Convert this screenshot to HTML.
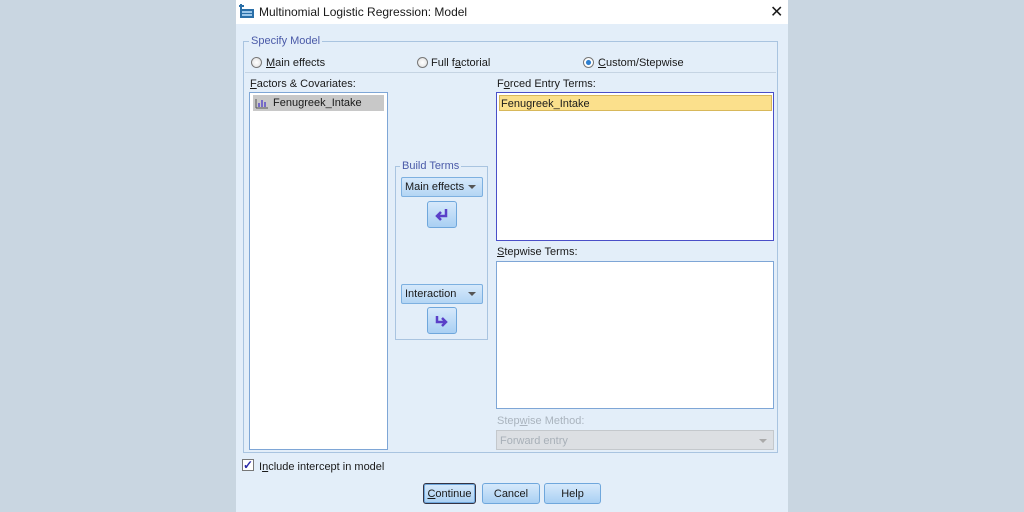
<!DOCTYPE html>
<html><head><meta charset="utf-8"><style>
*{margin:0;padding:0;box-sizing:border-box}
body{width:1024px;height:512px;background:#c9d6e1;position:relative;overflow:hidden;font-family:"Liberation Sans",sans-serif;font-size:11px;color:#1a1a1a}
.a{position:absolute}
#dlg{left:236px;top:0;width:552px;height:512px;background:#e3eef9}
#tb{left:0;top:0;width:552px;height:24px;background:#fff}
.box{background:#fff;border:1px solid #7ea6d6}
.btn{background:linear-gradient(#d6e9fb,#a9d0f3);border:1px solid #6fa7dc;border-radius:3px;text-align:center;color:#1a1a1a}
.dd{background:linear-gradient(#d6e9fb,#b3d5f4);border:1px solid #7db0e0;border-radius:2px;padding-left:3px;line-height:19px}
.dd:after{content:"";position:absolute;right:6px;top:7px;border:4px solid transparent;border-top:4px solid #555;border-bottom:0}
.radio{width:11px;height:11px;border-radius:50%;border:1px solid #777;background:radial-gradient(#fff,#ddd)}
u{text-decoration:underline}
</style></head><body>
<div id="dlg" class="a">
 <div id="tb" class="a">
  <svg class="a" style="left:3px;top:3px" width="16" height="16"><rect x="1" y="6" width="14" height="9" fill="#2a6fa8"/><rect x="3" y="8" width="10" height="2" fill="#9cc7ea"/><rect x="3" y="11" width="10" height="2" fill="#9cc7ea"/><path d="M2 1v6M0 3h5" stroke="#2a6fa8" stroke-width="2"/></svg>
  <div class="a" style="left:23px;top:5px;font-size:12px">Multinomial Logistic Regression: Model</div>
  <div class="a" style="left:534px;top:2px;font-size:16px">✕</div>
 </div>
 <div class="a" style="left:7px;top:41px;width:535px;height:412px;border:1px solid #a9c4e0"></div>
 <div class="a" style="left:13px;top:35px;background:#e3eef9;color:#4a5aa8;padding:0 2px">Specify Model</div>
 <div class="a radio" style="left:15px;top:57px"></div>
 <div class="a" style="left:30px;top:57px"><u>M</u>ain effects</div>
 <div class="a radio" style="left:181px;top:57px"></div>
 <div class="a" style="left:195px;top:57px">Full f<u>a</u>ctorial</div>
 <div class="a radio" style="left:347px;top:57px;background:radial-gradient(#2d7fd0 35%,#fff 45%)"></div>
 <div class="a" style="left:362px;top:57px"><u>C</u>ustom/Stepwise</div>
 <div class="a" style="left:9px;top:72px;width:531px;height:1px;background:#c5d4e3"></div>
 <div class="a" style="left:14px;top:78px"><u>F</u>actors &amp; Covariates:</div>
 <div class="a box" style="left:13px;top:92px;width:139px;height:358px">
  <div class="a" style="left:3px;top:2px;width:131px;height:16px;background:#c8c8c8"></div>
  <svg class="a" style="left:5px;top:3px" width="14" height="14"><path d="M1 12V3M1 12h12" stroke="#555"/><path d="M4 11V7M7 11V4M10 11V6" stroke="#5a4ac8" stroke-width="1.5"/></svg>
  <div class="a" style="left:23px;top:4px">Fenugreek_Intake</div>
 </div>
 <div class="a" style="left:159px;top:166px;width:93px;height:174px;border:1px solid #a9c4e0"></div>
 <div class="a" style="left:164px;top:160px;background:#e3eef9;color:#4a5aa8;padding:0 2px">Build Terms</div>
 <div class="a dd" style="left:165px;top:177px;width:82px;height:20px">Main effects</div>
 <div class="a btn" style="left:191px;top:201px;width:30px;height:27px"><svg width="28" height="25"><path d="M18 7v7h-8M13 10l-4 4 4 4" stroke="#5a3fc8" stroke-width="2.5" fill="none"/></svg></div>
 <div class="a dd" style="left:165px;top:284px;width:82px;height:20px">Interaction</div>
 <div class="a btn" style="left:191px;top:307px;width:30px;height:27px"><svg width="28" height="25"><path d="M9 8v6h8M14 10l4 4-4 4" stroke="#5a3fc8" stroke-width="2.5" fill="none"/></svg></div>
 <div class="a" style="left:261px;top:78px">F<u>o</u>rced Entry Terms:</div>
 <div class="a box" style="left:260px;top:92px;width:278px;height:149px;border-color:#4a4fc8">
  <div class="a" style="left:2px;top:2px;width:273px;height:16px;background:#fbe08c;border:1px solid #d8b85a"></div>
  <div class="a" style="left:4px;top:5px">Fenugreek_Intake</div>
 </div>
 <div class="a" style="left:261px;top:246px"><u>S</u>tepwise Terms:</div>
 <div class="a box" style="left:260px;top:261px;width:278px;height:148px"></div>
 <div class="a" style="left:261px;top:415px;color:#aab4be">Step<u>w</u>ise Method:</div>
 <div class="a" style="left:260px;top:430px;width:278px;height:20px;background:#dcdfe3;border:1px solid #c4c8cc;color:#a8b0b8;line-height:20px;padding-left:3px">Forward entry<span class="a" style="right:6px;top:8px;border:4px solid transparent;border-top-color:#aaa;border-bottom:0"></span></div>
 <div class="a" style="left:6px;top:459px;width:12px;height:12px;border:1px solid #777;background:#fff;color:#2a2aa8;font-size:12px;line-height:10px;font-weight:bold">✓</div>
 <div class="a" style="left:23px;top:461px">I<u>n</u>clude intercept in model</div>
 <div class="a btn" style="left:187px;top:483px;width:53px;height:21px;line-height:20px;border:1px solid #334;box-shadow:inset 0 0 0 1px #6fa7dc"><u>C</u>ontinue</div>
 <div class="a btn" style="left:246px;top:483px;width:58px;height:21px;line-height:20px">Cancel</div>
 <div class="a btn" style="left:308px;top:483px;width:57px;height:21px;line-height:20px">Help</div>
</div>
</body></html>
